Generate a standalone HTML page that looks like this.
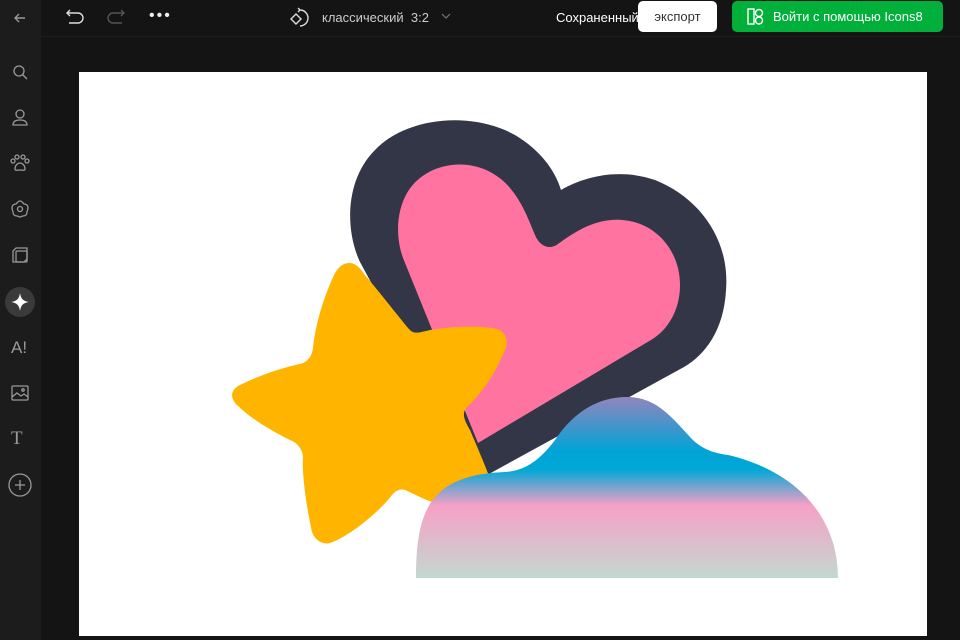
<!DOCTYPE html>
<html><head><meta charset="utf-8"><style>
*{margin:0;padding:0;box-sizing:border-box}
body{width:960px;height:640px;background:#141414;font-family:"Liberation Sans",sans-serif;position:relative;overflow:hidden}
.top{position:absolute;left:0;top:0;width:960px;height:37px;background:#141414;border-bottom:1px solid #1e1e1e}
.side{position:absolute;left:0;top:0;width:41px;height:640px;background:#1c1c1c}
.canvas{position:absolute;left:79px;top:72px;width:848px;height:564px;background:#fff}
.t{position:absolute;color:#ddd;font-size:13px}
svg.i{position:absolute}
</style></head><body>
<div class="side"></div>
<div class="top"></div>
<div style="position:absolute;left:0;top:0;width:41px;height:37px;background:#1c1c1c"></div>
<svg class="i" style="left:12px;top:10px" width="16" height="16" viewBox="0 0 16 16" fill="none" stroke="#999" stroke-width="1.4"><path d="M13 8H3M7 4L3 8l4 4"/></svg>
<svg class="i" style="left:65px;top:7px" width="22" height="20" viewBox="0 0 22 20" fill="none" stroke="#ddd" stroke-width="1.4"><path d="M5 3L2 6l3 3M2 6h11a5 5 0 0 1 0 10H4"/></svg>
<svg class="i" style="left:104px;top:7px" width="22" height="20" viewBox="0 0 22 20" fill="none" stroke="#555" stroke-width="1.4"><path d="M17 3l3 3-3 3M20 6H9a5 5 0 0 0 0 10h9"/></svg>
<div class="t" style="left:149px;top:7px;font-size:16px;letter-spacing:2px;color:#eee">•••</div>
<svg class="i" style="left:288px;top:6px" width="24" height="24" viewBox="0 0 24 24" fill="none" stroke="#ddd" stroke-width="1.4"><path d="M3 13l5-5 5 5-5 5z"/><path d="M12 4a8 8 0 1 1 0 16M12 4l-2-2M12 4l-2 2"/></svg>
<div class="t" style="left:322px;top:10px;color:#ccc">классический&nbsp; 3:2</div>
<svg class="i" style="left:441px;top:13px" width="10" height="7" viewBox="0 0 10 7" fill="none" stroke="#777" stroke-width="1.2"><path d="M1 1l4 4 4-4"/></svg>
<div class="t" style="left:556px;top:10px;color:#fff">Сохраненный</div>
<div style="position:absolute;left:638px;top:1px;width:79px;height:31px;background:#fff;border-radius:5px;color:#333;font-size:13px;text-align:center;line-height:31px">экспорт</div>
<div style="position:absolute;left:732px;top:1px;width:211px;height:31px;background:#00b03a;border-radius:5px;color:#fff;font-size:13px;line-height:31px;padding-left:41px">Войти с помощью Icons8</div>
<svg class="i" style="left:746px;top:7px" width="20" height="20" viewBox="0 0 20 20" fill="none" stroke="#fff" stroke-width="1.4"><rect x="2" y="2" width="6" height="15"/><circle cx="13" cy="6" r="3.5"/><circle cx="13" cy="13.5" r="3.5"/></svg>
<!-- sidebar icons -->
<svg class="i" style="left:10px;top:62px" width="20" height="20" viewBox="0 0 20 20" fill="none" stroke="#999" stroke-width="1.3"><circle cx="9" cy="9" r="5"/><path d="M12.5 12.5L17 17"/></svg>
<svg class="i" style="left:10px;top:108px" width="20" height="20" viewBox="0 0 20 20" fill="none" stroke="#999" stroke-width="1.3"><circle cx="10" cy="6" r="4"/><path d="M3 17c0-4 3-5 7-5s7 1 7 5z"/></svg>
<svg class="i" style="left:9px;top:153px" width="22" height="20" viewBox="0 0 22 20" fill="none" stroke="#999" stroke-width="1.3"><circle cx="4" cy="8" r="2"/><circle cx="8" cy="4" r="2"/><circle cx="14" cy="4" r="2"/><circle cx="18" cy="8" r="2"/><path d="M6 16c0-4 3-6 5-6s5 2 5 6c0 2-3 1-5 1s-5 1-5-1z"/></svg>
<svg class="i" style="left:9px;top:198px" width="22" height="22" viewBox="0 0 22 22" fill="none" stroke="#999" stroke-width="1.3"><path d="M11 3c2 0 3 2 4 3 2 0 4 1 4 4 0 2-1 3-1 4 0 2-1 4-4 4-1 0-2 1-3 1s-2-1-3-1c-3 0-4-2-4-4 0-1-1-2-1-4 0-3 2-4 4-4 1-1 2-3 4-3z"/><circle cx="11" cy="11" r="2.5"/></svg>
<svg class="i" style="left:10px;top:245px" width="20" height="20" viewBox="0 0 20 20" fill="none" stroke="#999" stroke-width="1.3"><path d="M3 6l3-3h11v11l-3 3H3z"/><rect x="6" y="6" width="11" height="11" rx="1"/></svg>
<div style="position:absolute;left:5px;top:287px;width:30px;height:30px;border-radius:50%;background:#3a3a3a"></div>
<svg class="i" style="left:10px;top:292px" width="20" height="20" viewBox="0 0 20 20"><path d="M10 1C11 7 13 9 19 10 13 11 11 13 10 19 9 13 7 11 1 10 7 9 9 7 10 1z" fill="#fff"/></svg>
<div class="t" style="left:11px;top:338px;font-size:17px;color:#999">A!</div>
<svg class="i" style="left:10px;top:383px" width="20" height="20" viewBox="0 0 20 20" fill="none" stroke="#999" stroke-width="1.3"><rect x="2" y="3" width="16" height="14" rx="1"/><path d="M2 14l5-4 4 3 3-2 4 3"/><circle cx="13" cy="7" r="1.2"/></svg>
<div class="t" style="left:11px;top:428px;font-size:19px;color:#999;font-family:'Liberation Serif',serif">T</div>
<svg class="i" style="left:8px;top:473px" width="24" height="24" viewBox="0 0 24 24" fill="none" stroke="#999" stroke-width="1.3"><circle cx="12" cy="12" r="11"/><path d="M12 7v10M7 12h10"/></svg>
<div class="canvas"></div>
<svg class="i" style="left:0;top:0" width="960" height="640" viewBox="0 0 960 640">
<defs><linearGradient id="g" x1="0" y1="397" x2="0" y2="578" gradientUnits="userSpaceOnUse">
<stop offset="0" stop-color="#9185bd"/><stop offset="0.3" stop-color="#00a3d5"/><stop offset="0.4" stop-color="#00a8d6"/><stop offset="0.6" stop-color="#f7a0c6"/><stop offset="1" stop-color="#c2d9d0"/></linearGradient></defs>
<path d="M478 480 L360 262 C345 230 345 180 375 150 C405 118 470 110 515 135 C540 150 555 170 561 190 C585 176 620 168 655 180 C700 198 730 240 726 290 C724 330 705 355 684 367 Z" fill="#333647"/>
<path d="M478 443 L403 258 C393 230 398 195 420 178 C440 162 470 160 492 173 C515 186 525 210 535 235 C540 247 550 250 558 244 C575 232 595 218 622 220 C655 222 680 250 680 285 C680 310 668 330 651 340 Z" fill="#ff73a0"/>
<path d="M349 263 C356 263 360 268 365 275 C390 305 405 325 410 330 C414 334 418 333 430 330 C460 325 490 326 500 330 C507 335 508 342 505 350 C495 375 480 395 466 408 C462 414 464 420 470 430 C485 465 495 490 500 505 L440 505 C425 500 410 492 405 490 C398 488 394 492 388 500 C370 520 345 538 330 543 C322 545 315 540 312 532 C305 500 302 470 303 458 C303 450 298 443 290 440 C270 430 250 418 237 405 C230 398 230 390 240 385 C260 375 285 367 300 364 C308 362 312 356 313 348 C316 320 325 295 334 275 C338 267 343 263 349 263 Z" fill="#ffb400"/>
<path d="M416 578 C416 510 430 475 505 472 C525 471 540 460 555 440 C575 410 600 397 627 397 C655 397 670 415 690 437 C700 448 712 453 728 455 C800 472 838 520 838 578 Z" fill="url(#g)"/>
</svg>
</body></html>
